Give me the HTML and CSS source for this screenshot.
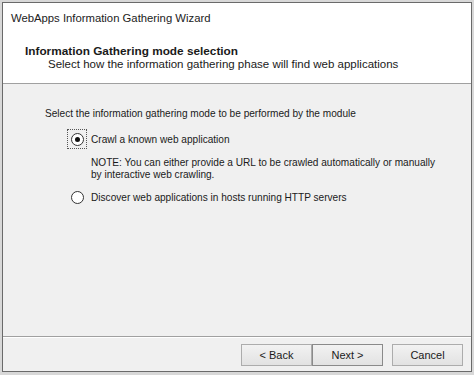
FILE: index.html
```html
<!DOCTYPE html>
<html>
<head>
  <title>WebApps Information Gathering Wizard</title>
  <link rel="stylesheet" href="styles.css">
</head>
<body>
  <div class="window">
    <div class="titlebar">WebApps Information Gathering Wizard</div>
    <div class="header">
      <div class="header-title">Information Gathering mode selection</div>
      <div class="header-sub">Select how the information gathering phase will find web applications</div>
    </div>
    <div class="content">
      <p class="prompt">Select the information gathering mode to be performed by the module</p>
      <div class="option">
        <span class="focus"><span class="radio checked"></span></span>
        <span class="label">Crawl a known web application</span>
      </div>
      <p class="note">NOTE: You can either provide a URL to be crawled automatically or manually<br>by interactive web crawling.</p>
      <div class="option second">
        <span class="focus blank"><span class="radio"></span></span>
        <span class="label">Discover web applications in hosts running HTTP servers</span>
      </div>
    </div>
    <div class="footer">
      <div class="btn-pair">
        <button class="btn">&lt; Back</button>
        <button class="btn default">Next &gt;</button>
      </div>
      <button class="btn">Cancel</button>
    </div>
  </div>
</body>
</html>
```

FILE: styles.css
```css
html, body {
  margin: 0;
  padding: 0;
}
body {
  background: #d8d8d8;
  font-family: "Liberation Sans", "Noto Sans", sans-serif;
  font-size: 10.1px;
  color: #1a1a1a;
  padding: 2px 2px 0 2px;
  height: 375px;
  box-sizing: border-box;
}
.window {
  border: 1px solid #6a6a6a;
  background: #f0f0f0;
  height: 370px;
  box-sizing: border-box;
  display: flex;
  flex-direction: column;
}
.titlebar {
  background: #fff;
  height: 30px;
  padding: 0 0 0 8px;
  display: flex;
  align-items: center;
  font-size: 11.3px;
  color: #222;
}
.header {
  background: #fff;
  height: 51px;
  border-bottom: 1px solid #a0a0a0;
  padding: 12px 0 0 22px;
  box-sizing: border-box;
}
.header-title {
  font-weight: bold;
  font-size: 11.8px;
  line-height: 13px;
}
.header-sub {
  padding-left: 23px;
  font-size: 11.5px;
  line-height: 12px;
}
.content {
  flex: 1;
  padding: 24px 0 0 42px;
  border-bottom: 1px solid #a0a0a0;
}
.prompt {
  margin: 0 0 9px 0;
  line-height: 12px;
}
.option {
  display: flex;
  align-items: center;
  gap: 4px;
  margin-left: 22px;
}
.option.second {
  margin-top: 6px;
}
.focus {
  width: 18px;
  height: 18px;
  border: 1px dotted #555;
  display: flex;
  align-items: center;
  justify-content: center;
}
.focus.blank {
  border-color: transparent;
}
.radio {
  width: 11px;
  height: 11px;
  border: 1px solid #333;
  border-radius: 50%;
  background: #fff;
  position: relative;
}
.radio.checked::after {
  content: "";
  position: absolute;
  left: 3px;
  top: 3px;
  width: 5px;
  height: 5px;
  border-radius: 50%;
  background: #111;
}
.note {
  margin: 8px 0 0 46px;
  line-height: 12px;
}
.footer {
  height: 33px;
  display: flex;
  align-items: center;
  justify-content: flex-end;
  gap: 9px;
  padding-right: 8px;
  border-top: 1px solid #fff;
}
.btn-pair {
  display: flex;
}
.btn {
  width: 71px;
  height: 22px;
  font-family: inherit;
  font-size: 11px;
  color: #1a1a1a;
  background: linear-gradient(#f2f2f2, #e2e2e2);
  border: 1px solid #acacac;
  padding: 0;
}
.btn.default {
  border-color: #8a8a8a;
}
```
